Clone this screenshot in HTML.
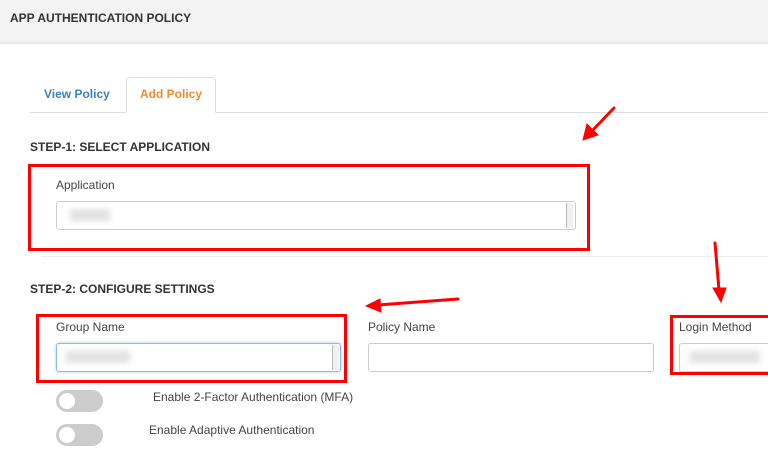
<!DOCTYPE html>
<html><head><style>
*{margin:0;padding:0;box-sizing:border-box}
body{width:768px;height:459px;background:#fff;font-family:"Liberation Sans",sans-serif;position:relative;overflow:hidden;color:#333}
.a{position:absolute}
.hdr{left:0;top:0;width:768px;height:44px;background:#f3f3f3;border-bottom:2px solid #e8e8e8}
.b{font-weight:bold;font-size:12px;color:#333}
.lbl{font-size:12px;color:#444}
.inp{border:1px solid #ccc;border-radius:3px;background:#fff}
.red{border:3px solid #f00}
.blur{background:#e2e2e2;filter:blur(3px);height:12px}
.tog{width:47px;height:22px;border-radius:11px;background:#ccc}
.tog::after{content:"";position:absolute;left:3px;top:3px;width:16px;height:16px;border-radius:50%;background:#fff}
.caret{width:7px;border-left:1px solid #bbb;background:#f0f0f0}
</style></head><body>
<div class="a hdr"></div>
<div class="a b" style="left:10px;top:11px">APP AUTHENTICATION POLICY</div>
<div class="a" style="left:30px;top:112px;width:738px;border-top:1px solid #ddd"></div>
<div class="a" style="left:126px;top:77px;width:90px;height:36px;border:1px solid #ddd;border-bottom:1px solid #fff;border-radius:4px 4px 0 0;background:#fff"></div>
<div class="a" style="left:44px;top:87px;font-size:12px;font-weight:bold;color:#3b7fc4">View Policy</div>
<div class="a" style="left:140px;top:87px;font-size:12px;font-weight:bold;color:#f38b2a">Add Policy</div>
<div class="a b" style="left:30px;top:140px">STEP-1: SELECT APPLICATION</div>
<div class="a red" style="left:28px;top:164px;width:562px;height:87px"></div>
<div class="a lbl" style="left:56px;top:178px">Application</div>
<div class="a inp" style="left:56px;top:201px;width:520px;height:29px"></div>
<div class="a blur" style="left:70px;top:209px;width:40px"></div>
<div class="a caret" style="left:566px;top:203px;height:25px"></div>
<div class="a" style="left:42px;top:256px;width:726px;border-top:1px solid #eee"></div>
<div class="a b" style="left:30px;top:282px">STEP-2: CONFIGURE SETTINGS</div>
<div class="a red" style="left:36px;top:314px;width:311px;height:69px"></div>
<div class="a lbl" style="left:56px;top:320px">Group Name</div>
<div class="a inp" style="left:56px;top:343px;width:285px;height:29px;border-color:#8cbbe8;box-shadow:0 0 3px #a8cdf0"></div>
<div class="a blur" style="left:66px;top:351px;width:64px"></div>
<div class="a caret" style="left:332px;top:345px;height:25px"></div>
<div class="a lbl" style="left:368px;top:320px">Policy Name</div>
<div class="a inp" style="left:368px;top:343px;width:286px;height:29px"></div>
<div class="a red" style="left:670px;top:315px;width:102px;height:60px"></div>
<div class="a lbl" style="left:679px;top:320px">Login Method</div>
<div class="a inp" style="left:679px;top:343px;width:100px;height:29px"></div>
<div class="a blur" style="left:690px;top:351px;width:70px"></div>
<div class="a tog" style="left:56px;top:390px"></div>
<div class="a tog" style="left:56px;top:424px"></div>
<div class="a lbl" style="left:153px;top:390px">Enable 2-Factor Authentication (MFA)</div>
<div class="a lbl" style="left:149px;top:423px">Enable Adaptive Authentication</div>
<svg class="a" style="left:0;top:0" width="768" height="459">
<g stroke="#f00" stroke-width="3" fill="#f00" stroke-linecap="round">
<line x1="614" y1="108" x2="592" y2="131"/>
<polygon points="583,140 587,124 598,135" stroke-width="1"/>
<line x1="458" y1="299" x2="378" y2="305"/>
<polygon points="366,306 380,299 381,312" stroke-width="1"/>
<line x1="715" y1="243" x2="719" y2="290"/>
<polygon points="721,302 713,288 726,288" stroke-width="1"/>
</g></svg>
</body></html>
